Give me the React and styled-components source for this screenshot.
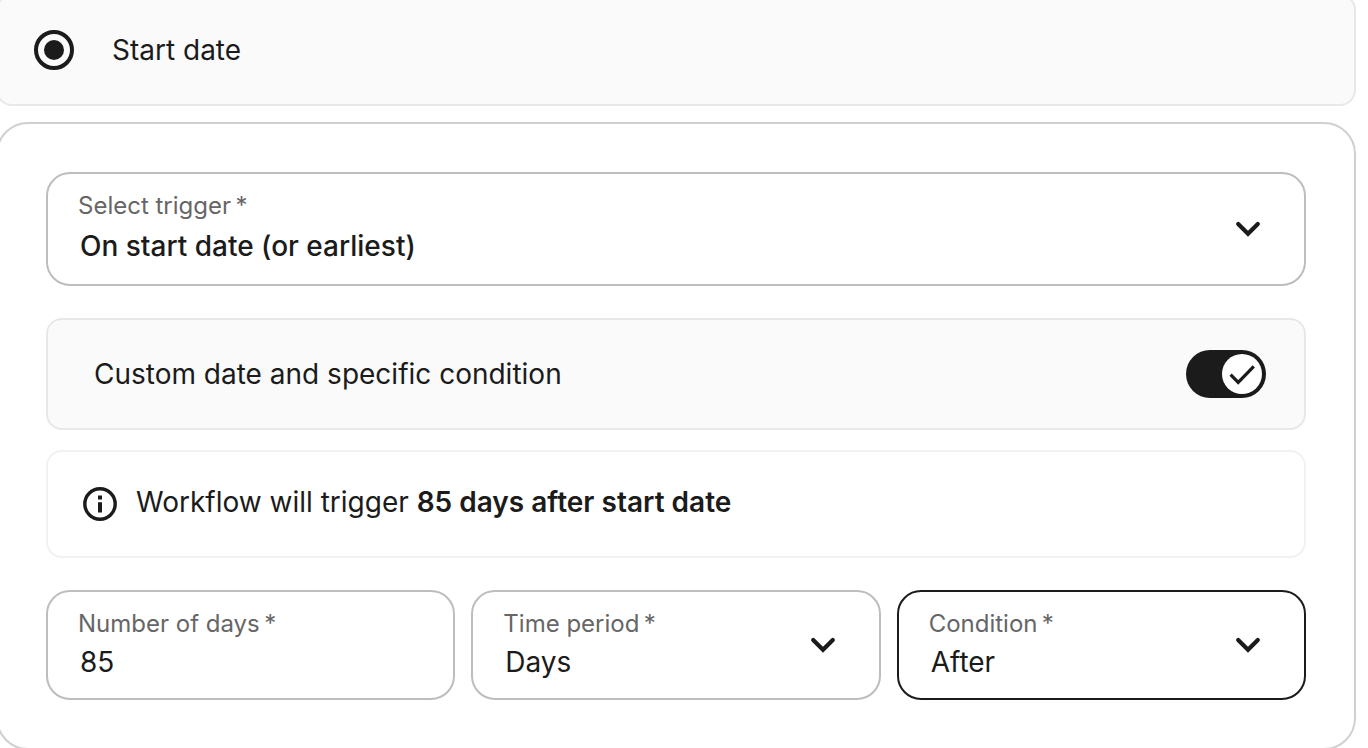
import { useState } from "react";
import styled, { createGlobalStyle } from "styled-components";

export default function App(){
    const [trigger, setTrigger] = useState("On start date (or earliest)");
    const [custom, setCustom] = useState(true);
    const [amount, setAmount] = useState("85");
    const [period, setPeriod] = useState("Days");
    const [condition, setCondition] = useState("After");

    return(
        <>
            <GlobalStyle />
            <Page>
                <OptionCard>
                    <Radio type="radio" id="start-date" name="date" defaultChecked />
                    <label htmlFor="start-date">Start date</label>
                </OptionCard>
                <Panel>
                    <SelectField
                        id="trigger"
                        label="Select trigger"
                        value={trigger}
                        onChange={setTrigger}
                        options={["On start date (or earliest)", "On start date"]}
                        $large
                    />
                    <SwitchRow>
                        <label htmlFor="custom-date">Custom date and specific condition</label>
                        <Switch>
                            <SwitchInput
                                type="checkbox"
                                role="switch"
                                id="custom-date"
                                checked={custom}
                                onChange={(e) => setCustom(e.target.checked)}
                            />
                            <Thumb $on={custom}>{custom && <CheckIcon />}</Thumb>
                        </Switch>
                    </SwitchRow>
                    <Info>
                        <InfoIcon />
                        <p>
                            Workflow will trigger{" "}
                            <strong>{amount} {period.toLowerCase()} {condition.toLowerCase()} start date</strong>
                        </p>
                    </Info>
                    <Fields>
                        <Field>
                            <FieldText>
                                <Label htmlFor="amount">Number of days{"\u2009"}*</Label>
                                <Input
                                    id="amount"
                                    inputMode="numeric"
                                    value={amount}
                                    onChange={(e) => setAmount(e.target.value)}
                                />
                            </FieldText>
                        </Field>
                        <SelectField
                            id="period"
                            label="Time period"
                            value={period}
                            onChange={setPeriod}
                            options={["Days", "Weeks", "Months"]}
                        />
                        <SelectField
                            id="condition"
                            label="Condition"
                            value={condition}
                            onChange={setCondition}
                            options={["After", "Before"]}
                            $active
                        />
                    </Fields>
                </Panel>
            </Page>
        </>
    )
}

function SelectField({ id, label, value, onChange, options, $large, $active }){
    return(
        <Field $active={$active}>
            <FieldText>
                <Label htmlFor={id}>{label}{"\u2009"}*</Label>
                <Select id={id} value={value} onChange={(e) => onChange(e.target.value)} $large={$large}>
                    {options.map((option) => <option key={option}>{option}</option>)}
                </Select>
            </FieldText>
            <ChevronIcon />
        </Field>
    )
}

function ChevronIcon(){
    return(
        <Chevron viewBox="0 0 24 24" aria-hidden="true">
            <path d="M7.1 9.5l4.9 4.9 4.9-4.9" fill="none" stroke="currentColor" strokeWidth="2.1" strokeLinecap="round" />
        </Chevron>
    )
}

function CheckIcon(){
    return(
        <svg width="40" height="40" viewBox="0 0 40 40" aria-hidden="true">
            <path d="M8.6 20.6l7.6 7.8L31.8 12.4" fill="none" stroke="currentColor" strokeWidth="3.2" />
        </svg>
    )
}

function InfoIcon(){
    return(
        <InfoSvg viewBox="0 0 40 40" aria-hidden="true">
            <circle cx="20" cy="20" r="15.2" fill="none" stroke="currentColor" strokeWidth="3.4" />
            <path d="M18 11.4h4v4h-4zM18 18.2h4v10.2h-4z" fill="currentColor" />
        </InfoSvg>
    )
}

const GlobalStyle = createGlobalStyle`
    *{
        box-sizing: border-box;
    }
    body{
        margin: 0;
        overflow: hidden;
        background: #ffffff;
        color: #1b1b1b;
        font-family: Inter, "Liberation Sans", sans-serif;
        font-size: 28px;
        line-height: 36px;
    }
    p{
        margin: 0;
    }
`
const Page = styled.main`
    display: flex;
    flex-direction: column;
    gap: 16px;
    margin: -6px 12px 0 -4px;
`
const OptionCard = styled.div`
    display: flex;
    align-items: center;
    gap: 38px;
    padding: 34px 36px;
    border: 2px solid #e8e8e8;
    border-radius: 16px;
    background: #fafafa;
`
const Radio = styled.input`
    appearance: none;
    width: 40px;
    height: 40px;
    margin: 0;
    padding: 6px;
    border: 4px solid #1b1b1b;
    border-radius: 50%;
    &:checked{
        background: #1b1b1b content-box;
    }
`
const Panel = styled.section`
    padding: 48px;
    border: 2px solid #d0d0d0;
    border-radius: 32px;
`
const Field = styled.div`
    display: flex;
    align-items: center;
    min-width: 0;
    padding: 16px 32px 16px 30px;
    border: 2px solid ${(props) => props.$active ? "#1b1b1b" : "#bdbdbd"};
    border-radius: 24px;
`
const FieldText = styled.div`
    display: flex;
    flex-direction: column;
    flex: 1;
    min-width: 0;
`
const Label = styled.label`
    color: #666666;
    font-size: 24px;
    line-height: 32px;
`
const Input = styled.input`
    width: 100%;
    height: 42px;
    padding: 2px 0 0 2px;
    border: none;
    outline: none;
    background: transparent;
    color: inherit;
    font: inherit;
`
const Select = styled.select`
    appearance: none;
    width: 100%;
    height: ${(props) => props.$large ? "46px" : "42px"};
    padding: 2px 0 0 2px;
    border: none;
    outline: none;
    background: transparent;
    color: inherit;
    font: inherit;
    font-weight: ${(props) => props.$large ? 500 : 400};
`
const Chevron = styled.svg`
    flex: none;
    width: 48px;
    height: 48px;
    pointer-events: none;
`
const SwitchRow = styled.div`
    display: flex;
    align-items: center;
    justify-content: space-between;
    margin-top: 32px;
    padding: 30px 38px 30px 46px;
    border: 2px solid #e8e8e8;
    border-radius: 16px;
    background: #fafafa;
`
const Switch = styled.span`
    display: grid;
    align-items: center;
    > *{
        grid-area: 1 / 1;
    }
`
const SwitchInput = styled.input`
    appearance: none;
    width: 80px;
    height: 48px;
    margin: 0;
    border-radius: 24px;
    background: #8a8a8a;
    &:checked{
        background: #1b1b1b;
    }
`
const Thumb = styled.span`
    display: flex;
    justify-self: ${(props) => props.$on ? "end" : "start"};
    width: 40px;
    height: 40px;
    margin: 0 4px;
    border-radius: 50%;
    background: #ffffff;
    pointer-events: none;
`
const Info = styled.div`
    display: flex;
    align-items: flex-start;
    gap: 16px;
    margin-top: 20px;
    padding: 32px;
    border: 2px solid #f1f1f1;
    border-radius: 16px;
    strong{
        font-weight: 600;
    }
`
const InfoSvg = styled.svg`
    flex: none;
    width: 40px;
    height: 40px;
`
const Fields = styled.div`
    display: grid;
    grid-template-columns: repeat(3, minmax(0, 1fr));
    gap: 16px;
    margin-top: 32px;
`
